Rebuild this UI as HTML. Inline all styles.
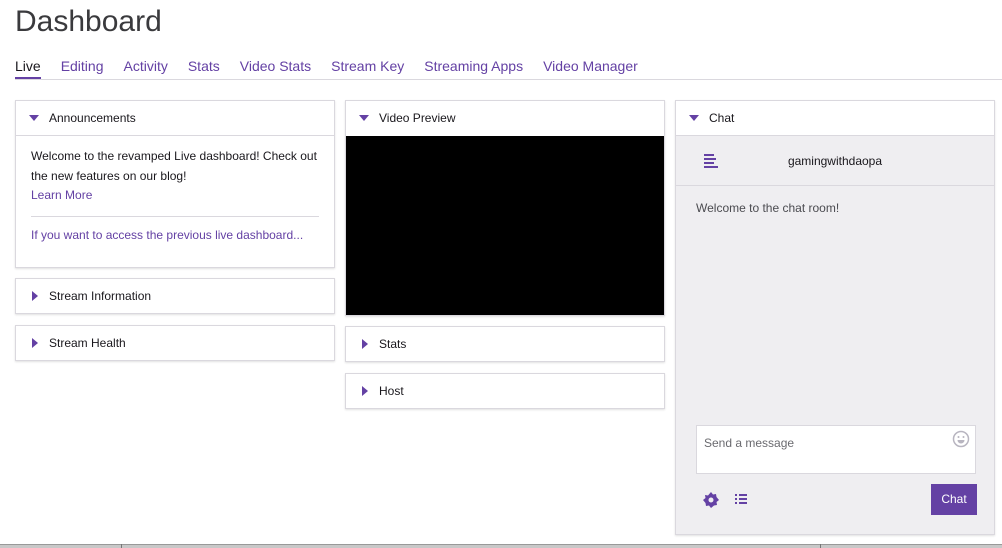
<!DOCTYPE html>
<html><head><style>
*{box-sizing:border-box;margin:0;padding:0}
body{width:1002px;height:548px;overflow:hidden;background:#fff;font-family:"Liberation Sans",sans-serif;position:relative;color:#19171c}
.abs{position:absolute}
h1{position:absolute;left:15px;top:5px;font-size:30px;font-weight:normal;color:#3a3a3d}
.nav{position:absolute;left:15px;top:58px;font-size:14px;color:#6441a4}
.nav span{margin-right:20px}
.nav .on{color:#19171c;display:inline-block;border-bottom:2px solid #6441a4;padding-bottom:3px}
.navline{position:absolute;left:15px;right:0;top:79px;border-top:1px solid #dad8de}
.panel{position:absolute;background:#fff;border:1px solid #dad8de;box-shadow:0 1px 2px rgba(0,0,0,.12)}
.hd{height:35px;line-height:34px;font-size:12px;padding-left:33px;position:relative}
.dn:before{content:"";position:absolute;left:13px;top:14px;border-left:5px solid transparent;border-right:5px solid transparent;border-top:6px solid #6441a4}
.rt:before{content:"";position:absolute;left:16px;top:12px;border-top:5px solid transparent;border-bottom:5px solid transparent;border-left:6px solid #6441a4}
a{color:#6441a4;text-decoration:none}
</style></head><body>
<h1>Dashboard</h1>
<div class="nav"><span class="on">Live</span><span>Editing</span><span>Activity</span><span>Stats</span><span>Video Stats</span><span>Stream Key</span><span>Streaming Apps</span><span>Video Manager</span></div>
<div class="navline"></div>

<div class="panel" style="left:15px;top:100px;width:320px;height:168px">
<div class="hd dn" style="border-bottom:1px solid #dad8de">Announcements</div>
<div style="padding:11px 15px 0 15px;font-size:12px;line-height:19.5px">Welcome to the revamped Live dashboard! Check out the new features on our blog!<br><a>Learn More</a>
<div style="border-top:1px solid #dad8de;margin-top:10px;padding-top:9px"><a>If you want to access the previous live dashboard...</a></div></div>
</div>
<div class="panel" style="left:15px;top:278px;width:320px;height:36px"><div class="hd rt">Stream Information</div></div>
<div class="panel" style="left:15px;top:325px;width:320px;height:36px"><div class="hd rt">Stream Health</div></div>

<div class="panel" style="left:345px;top:100px;width:320px;height:216px">
<div class="hd dn">Video Preview</div>
<div style="background:#000;height:179px"></div></div>
<div class="panel" style="left:345px;top:326px;width:320px;height:36px"><div class="hd rt">Stats</div></div>
<div class="panel" style="left:345px;top:373px;width:320px;height:36px"><div class="hd rt">Host</div></div>

<div class="panel" style="left:675px;top:100px;width:320px;height:435px;background:#efeef1">
<div class="hd dn" style="background:#fff;border-bottom:1px solid #dad8de">Chat</div>
<div style="height:50px;border-bottom:1px solid #dad8de;position:relative">
<div class="abs" style="left:28px;top:18px;width:14px">
<div style="height:2px;background:#6441a4;width:10px;margin-bottom:2px"></div>
<div style="height:2px;background:#6441a4;width:12px;margin-bottom:2px"></div>
<div style="height:2px;background:#6441a4;width:10px;margin-bottom:2px"></div>
<div style="height:2px;background:#6441a4;width:14px"></div></div>
<div class="abs" style="left:0;right:0;top:18px;text-align:center;font-size:12px">gamingwithdaopa</div></div>
<div class="abs" style="left:20px;top:100px;font-size:12px;color:#4b4b50">Welcome to the chat room!</div>
<div class="abs" style="left:20px;top:324px;width:280px;height:49px;background:#fff;border:1px solid #dad8de;font-size:12px;color:#6a6a6f;padding:10px 7px">Send a message
<svg class="abs" style="right:5px;top:4px" width="18" height="18" viewBox="0 0 18 18"><circle cx="9" cy="9" r="7.5" fill="none" stroke="#b8b5c0" stroke-width="1.5"/><circle cx="6.5" cy="7" r="1" fill="#b8b5c0"/><circle cx="11.5" cy="7" r="1" fill="#b8b5c0"/><path d="M5.5 10h7a3.5 3.5 0 0 1-7 0z" fill="#b8b5c0"/></svg></div>
<svg class="abs" style="left:26px;top:390px" width="18" height="18" viewBox="0 0 18 18"><path d="M9 1l2 2.5 3-.5.5 3L17 9l-2.5 2 .5 3-3 .5L9 17l-2-2.5-3 .5-.5-3L1 9l2.5-2L3 4l3 .5z" fill="#6441a4"/><circle cx="9" cy="9" r="2.5" fill="#efeef1"/></svg>
<svg class="abs" style="left:58px;top:391px" width="14" height="14" viewBox="0 0 14 14" fill="#6441a4"><rect x="1" y="2" width="2" height="2"/><rect x="5" y="2" width="8" height="2"/><rect x="1" y="6" width="2" height="2"/><rect x="5" y="6" width="8" height="2"/><rect x="1" y="10" width="2" height="2"/><rect x="5" y="10" width="8" height="2"/></svg>
<div class="abs" style="left:255px;top:383px;width:46px;height:31px;background:#6441a4;color:#fff;font-size:12px;text-align:center;line-height:30px">Chat</div>
</div>

<div class="abs" style="left:0;top:544px;width:1002px;height:4px;background:#c8c8c8;border-top:1px solid #999"></div>
<div class="abs" style="left:121px;top:544px;width:1px;height:4px;background:#777"></div>
<div class="abs" style="left:820px;top:544px;width:1px;height:4px;background:#777"></div>
</body></html>
